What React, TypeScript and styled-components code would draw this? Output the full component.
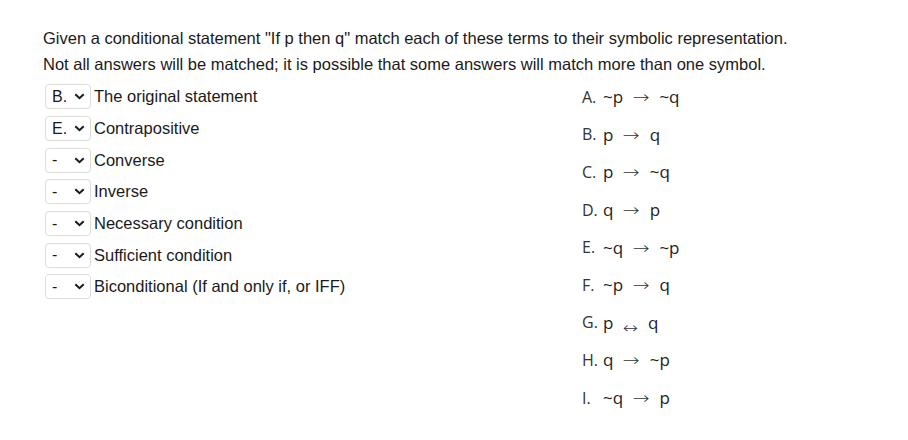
import React from 'react';
import styled, { createGlobalStyle } from 'styled-components';

const GlobalStyle = createGlobalStyle`
  body {
    margin: 0;
    background: #fff;
    font-family: "Liberation Sans", Arial, sans-serif;
    color: #1a1a1a;
  }
`;

const terms = [
  { value: 'B.', label: 'The original statement' },
  { value: 'E.', label: 'Contrapositive' },
  { value: '-', label: 'Converse' },
  { value: '-', label: 'Inverse' },
  { value: '-', label: 'Necessary condition' },
  { value: '-', label: 'Sufficient condition' },
  { value: '-', label: 'Biconditional (If and only if, or IFF)' },
];

const symbols = [
  { letter: 'A.', left: '~p', op: '→', right: '~q' },
  { letter: 'B.', left: 'p', op: '→', right: 'q' },
  { letter: 'C.', left: 'p', op: '→', right: '~q' },
  { letter: 'D.', left: 'q', op: '→', right: 'p' },
  { letter: 'E.', left: '~q', op: '→', right: '~p' },
  { letter: 'F.', left: '~p', op: '→', right: 'q' },
  { letter: 'G.', left: 'p', op: '↔', right: 'q' },
  { letter: 'H.', left: 'q', op: '→', right: '~p' },
  { letter: 'I.', left: '~q', op: '→', right: 'p' },
];

function Chevron() {
  return (
    <svg width="11" height="7" viewBox="0 0 11 7">
      <path d="M1.3 1.2 L5.5 5.2 L9.7 1.2" fill="none" stroke="#1a1a1a" strokeWidth="2" />
    </svg>
  );
}

export default function App() {
  return (
    <Page>
      <GlobalStyle />
      <Intro>
        Given a conditional statement "If p then q" match each of these terms to their symbolic representation.
        <br />
        Not all answers will be matched; it is possible that some answers will match more than one symbol.
      </Intro>

      <Columns>
        <Terms>
          {terms.map((t) => (
            <TermRow key={t.label}>
              <Select>
                <span>{t.value}</span>
                <Chevron />
              </Select>
              <TermLabel>{t.label}</TermLabel>
            </TermRow>
          ))}
        </Terms>

        <Symbols>
          {symbols.map((s) => (
            <SymbolRow key={s.letter}>
              <Letter>{s.letter}</Letter>
              <Expr>
                <span>{s.left}</span>
                <Op $bi={s.op === '↔'}>{s.op}</Op>
                <span>{s.right}</span>
              </Expr>
            </SymbolRow>
          ))}
        </Symbols>
      </Columns>
    </Page>
  );
}

const Page = styled.div`
  padding: 25px 0 0 43px;
  width: 908px;
  height: 440px;
  box-sizing: border-box;
  overflow: hidden;
`;

const Intro = styled.p`
  margin: 0;
  font-size: 16.5px;
  line-height: 26px;
`;

const Columns = styled.div`
  display: flex;
  align-items: flex-start;
  margin-top: 4px;
`;

const Terms = styled.div`
  width: 539px;
  display: flex;
  flex-direction: column;
`;

const TermRow = styled.div`
  display: flex;
  align-items: center;
  height: 31.7px;
  font-size: 16.5px;
`;

const Select = styled.div`
  display: flex;
  align-items: center;
  justify-content: space-between;
  box-sizing: border-box;
  width: 46px;
  height: 25px;
  margin-left: 2px;
  padding: 0 5px 0 6px;
  border: 1px solid #dcdcdc;
  border-radius: 4px;
  font-size: 16px;
  color: #1a1a1a;
`;

const TermLabel = styled.span`
  margin-left: 3px;
`;

const Symbols = styled.div`
  display: flex;
  flex-direction: column;
  margin-top: -3px;
`;

const SymbolRow = styled.div`
  display: flex;
  align-items: center;
  height: 37.6px;
  font-family: "Open Sans", "Noto Sans", sans-serif;
  color: #222;
`;

const Letter = styled.span`
  width: 21px;
  font-size: 16px;
  color: #333;
`;

const Expr = styled.span`
  display: flex;
  align-items: baseline;
  gap: 10px;
  font-size: 17px;
`;

const Op = styled.span<{ $bi?: boolean }>`
  display: inline-block;
  font-family: "DejaVu Sans", sans-serif;
  font-weight: 200;
  font-size: ${(p) => (p.$bi ? '15px' : '17px')};
  color: #333;
  transform: scaleX(1.2);
  margin: 0 1px;
  position: relative;
  top: ${(p) => (p.$bi ? '4px' : '0')};
`;
